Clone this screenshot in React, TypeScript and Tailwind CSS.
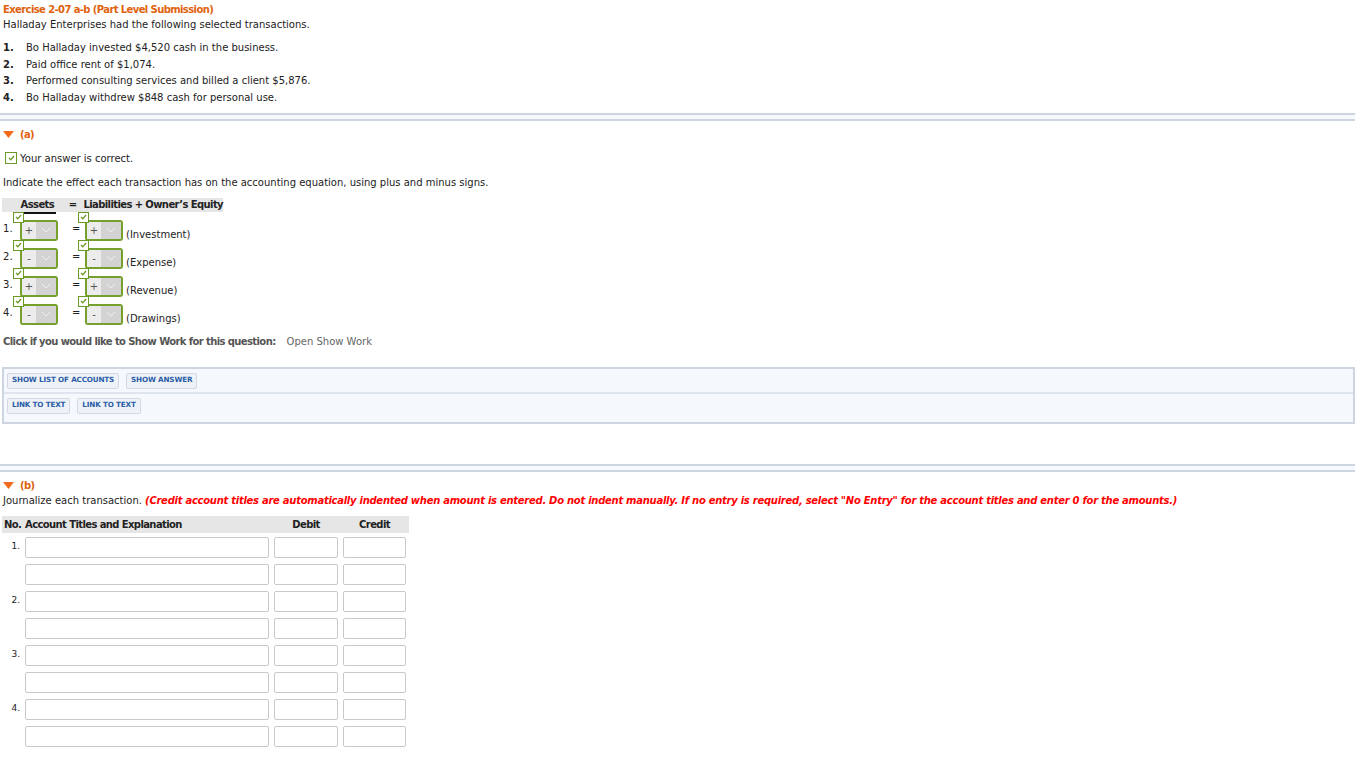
import React from "react";

const font = { fontFamily: '"DejaVu Sans", Verdana, sans-serif' };

function Check({ className = "" }: { className?: string }) {
  return (
    <span className={`inline-flex items-center justify-center w-[11px] h-[11px] border border-[#6b9a24] bg-white ${className}`}>
      <svg width="7" height="6" viewBox="0 0 7 6">
        <path d="M1 3 L2.8 4.8 L6 1" stroke="#6b9a24" strokeWidth="1.3" fill="none" />
      </svg>
    </span>
  );
}

function Sel({ v }: { v: string }) {
  return (
    <div className="relative w-[38px] h-[21px]">
      <Check className="absolute -left-[7px] -top-[8px] z-10" />
      <div className="flex w-full h-full border-2 border-[#75a02d] rounded-[3px] overflow-hidden">
        <div className="w-[14px] bg-[#ececec] flex items-center justify-center text-[10px] text-[#555]">{v}</div>
        <div className="flex-1 bg-[#d3d3d3] flex items-center justify-center">
          <svg width="10" height="6" viewBox="0 0 10 6">
            <path d="M1 1 L5 5 L9 1" stroke="#eeeeee" strokeWidth="1" fill="none" />
          </svg>
        </div>
      </div>
    </div>
  );
}

function Sep() {
  return <div className="h-[8px] border-t-2 border-b-2 border-[#cdd5e0] bg-[#f5f8fc]" />;
}

function Btn({ children }: { children: React.ReactNode }) {
  return (
    <span className="inline-flex items-center h-[16px] px-[4px] border border-[#d3d9e2] rounded-[2px] bg-[#eef2f7] text-[7.2px] tracking-[-0.15px] font-bold text-[#2a5da8] whitespace-nowrap">
      {children}
    </span>
  );
}

function Tri() {
  return (
    <svg width="11" height="7" viewBox="0 0 11 7" className="inline-block mr-[6px]">
      <path d="M0 0 L11 0 L5.5 7 Z" fill="#f26a1b" />
    </svg>
  );
}

const rows = [
  { a: "+", l: "+", t: "(Investment)" },
  { a: "-", l: "-", t: "(Expense)" },
  { a: "+", l: "+", t: "(Revenue)" },
  { a: "-", l: "-", t: "(Drawings)" },
];

function Inp({ w }: { w: string }) {
  return <div className={`${w} h-[21px] border border-[#c9c9c9] rounded-[2px] bg-white`} />;
}

const B = "font-bold tracking-[-0.6px]";

export default function App() {
  return (
    <div style={font} className="w-[1355px] h-[758px] bg-white text-[#222] text-[10px] overflow-hidden">
      <div className="px-[3px] pt-[3px]">
        <div className={`text-[#e0620e] ${B} leading-[13px]`}>Exercise 2-07 a-b (Part Level Submission)</div>
        <div className="mt-[2px] leading-[13px]">Halladay Enterprises had the following selected transactions.</div>
        <div className="mt-[10px] flex flex-col gap-[3.5px]">
          {[
            "Bo Halladay invested $4,520 cash in the business.",
            "Paid office rent of $1,074.",
            "Performed consulting services and billed a client $5,876.",
            "Bo Halladay withdrew $848 cash for personal use.",
          ].map((s, i) => (
            <div key={i} className="flex leading-[13px]">
              <span className="w-[23px] font-bold">{i + 1}.</span>
              <span>{s}</span>
            </div>
          ))}
        </div>
      </div>
      <div className="mt-[9px]">
        <Sep />
      </div>
      <div className="px-[3px] pt-[7px]">
        <div className={`flex items-center text-[#e0620e] ${B} leading-[13px]`}>
          <Tri />
          <span>(a)</span>
        </div>
        <div className="mt-[11px] flex items-center gap-[3px] pl-[2px] leading-[13px]">
          <Check className="w-[12px] h-[12px]" />
          <span>Your answer is correct.</span>
        </div>
        <div className="mt-[11px] leading-[13px]">Indicate the effect each transaction has on the accounting equation, using plus and minus signs.</div>
        <div className={`mt-[9px] w-[221px] h-[14px] bg-[#e6e6e6] flex items-center ${B} leading-[14px] -ml-[1px] whitespace-nowrap`}>
          <span className="ml-[17px] w-[39px] text-center h-[14px] shadow-[0_2px_0_#111]">Assets</span>
          <span className="ml-[13px]">=</span>
          <span className="ml-[7px]">Liabilities + Owner’s Equity</span>
        </div>
        <div className="mt-[8px] flex flex-col gap-[7px]">
          {rows.map((r, i) => (
            <div key={i} className="flex items-start h-[21px]">
              <span className="w-[17px] pt-[2px] leading-[13px]">{i + 1}.</span>
              <Sel v={r.a} />
              <span className="w-[27px] pl-[14px] pt-[2px] leading-[13px]">=</span>
              <Sel v={r.l} />
              <span className="ml-[3px] pt-[8px] leading-[13px]">{r.t}</span>
            </div>
          ))}
        </div>
        <div className="mt-[10px] flex leading-[13px] text-[#555]">
          <span className={B}>Click if you would like to Show Work for this question:</span>
          <span className="ml-[11px] text-[#666]">Open Show Work</span>
        </div>
      </div>
      <div className="mt-[19px] ml-[2px] border-2 border-[#cdd5e0] bg-[#f5f8fc]">
        <div className="flex gap-[7px] px-[3px] pt-[4px] pb-[3px] border-b-2 border-[#dfe5ee]">
          <Btn>SHOW LIST OF ACCOUNTS</Btn>
          <Btn>SHOW ANSWER</Btn>
        </div>
        <div className="flex gap-[7px] px-[3px] pt-[4px] pb-[8px]">
          <Btn>LINK TO TEXT</Btn>
          <Btn>LINK TO TEXT</Btn>
        </div>
      </div>
      <div className="mt-[40px]">
        <Sep />
      </div>
      <div className="px-[3px] pt-[7px]">
        <div className={`flex items-center text-[#e0620e] ${B} leading-[13px]`}>
          <Tri />
          <span>(b)</span>
        </div>
        <div className="mt-[2px] leading-[13px] whitespace-nowrap">
          Journalize each transaction.{" "}
          <span className="text-[#f00] italic font-bold tracking-[-0.27px]">
            (Credit account titles are automatically indented when amount is entered. Do not indent manually. If no entry is required, select "No Entry" for the account titles and enter 0 for the amounts.)
          </span>
        </div>
        <div className={`mt-[9px] -ml-[1px] w-[407px] h-[17px] bg-[#e6e6e6] flex items-center ${B} leading-[13px] whitespace-nowrap`}>
          <span className="ml-[2px] w-[21px]">No.</span>
          <span className="w-[249px]">Account Titles and Explanation</span>
          <span className="w-[64px] text-center">Debit</span>
          <span className="ml-[5px] w-[63px] text-center">Credit</span>
        </div>
        <div className="mt-[4px] flex flex-col gap-[6px]">
          {[1, 2, 3, 4].map((n) => (
            <React.Fragment key={n}>
              <div className="flex items-center gap-[5px]">
                <span className="w-[17px] text-right text-[9px]">{n}.</span>
                <Inp w="w-[244px]" />
                <Inp w="w-[64px]" />
                <Inp w="w-[63px]" />
              </div>
              <div className="flex items-center gap-[5px]">
                <span className="w-[17px]" />
                <Inp w="w-[244px]" />
                <Inp w="w-[64px]" />
                <Inp w="w-[63px]" />
              </div>
            </React.Fragment>
          ))}
        </div>
      </div>
    </div>
  );
}
